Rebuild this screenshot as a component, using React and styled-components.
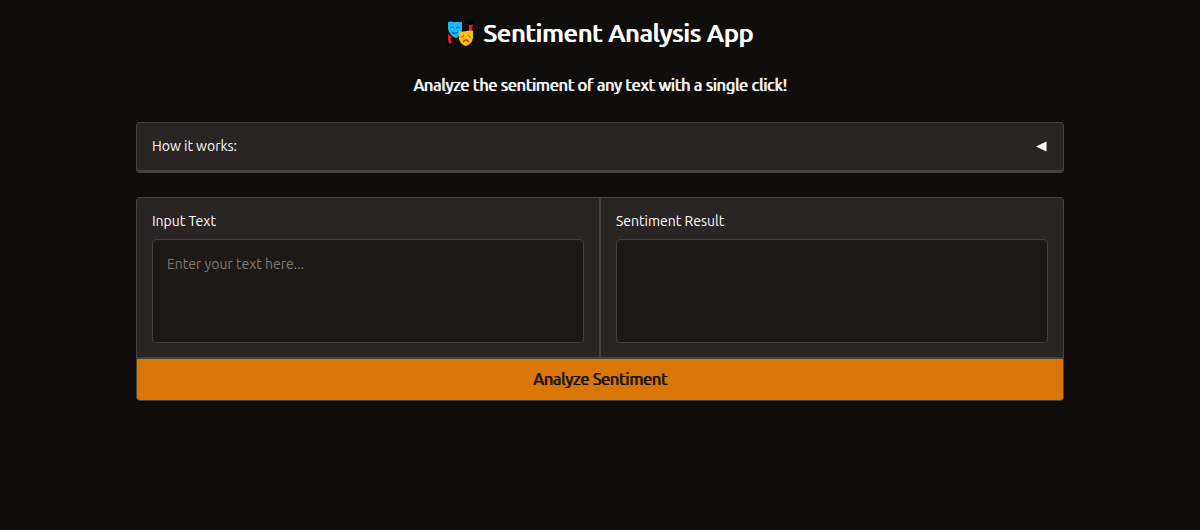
import React, { useState } from 'react';
import styled, { createGlobalStyle } from 'styled-components';

/* Component Styling */
const GlobalStyle = createGlobalStyle`
    * {
        box-sizing: border-box;
    }
    body {
        margin: 0;
        background-color: #0f0e0d;
        color: #fff;
        font-family: "Ubuntu", "Noto Sans", sans-serif;
        font-size: 14px;
        line-height: 21px;
    }
`;
const Page = styled.main`
    max-width: 960px;
    margin: 0 auto;
    padding: 14px 16px;
`;
const Title = styled.h1`
    display: flex;
    align-items: center;
    justify-content: center;
    gap: 9px;
    margin: 0 0 22px;
    font-size: 25px;
    font-weight: 500;
    line-height: 38px;
    text-shadow: 1px 0 currentColor;
`;
const Subtitle = styled.h3`
    margin: 0 0 26px;
    font-size: 16px;
    font-weight: 400;
    line-height: 22px;
    text-align: center;
    text-shadow: 1px 0 currentColor;
`;
const Accordion = styled.section`
    margin-bottom: 24px;
    border: 1px solid #44403c;
    border-bottom-width: 3px;
    border-radius: 4px;
    background-color: #292524;
`;
const AccordionButton = styled.button`
    display: flex;
    align-items: center;
    justify-content: space-between;
    width: 100%;
    padding: 13px 16px 13px 15px;
    border: none;
    background: none;
    color: #fff;
    font: inherit;
    cursor: pointer;
`;
const AccordionBody = styled.p`
    margin: 0;
    padding: 0 15px 13px;
`;
const Arrow = styled.svg`
    transform: ${props => props.$open ? 'rotate(-90deg)' : 'none'};
`;
const Panel = styled.form`
    overflow: hidden;
    border: 1px solid #44403c;
    border-radius: 4px;
    background-color: #44403c;
`;
const Columns = styled.div`
    display: grid;
    grid-template-columns: 1fr 1fr;
    gap: 2px;
    margin-bottom: 2px;
`;
const Field = styled.div`
    padding: 13px 15px 14px;
    background-color: #292524;
`;
const FieldLabel = styled.label`
    display: block;
    margin-bottom: 7px;
`;
const TextArea = styled.textarea`
    display: block;
    width: 100%;
    height: 104px;
    padding: 14px;
    border: 1px solid #44403c;
    border-radius: 4px;
    outline: none;
    background-color: #1c1917;
    color: #fff;
    font: inherit;
    resize: none;

    &::placeholder {
        color: #807973;
        opacity: 1;
    }
`;
const SubmitButton = styled.button`
    display: block;
    width: 100%;
    padding: 9px 16px 10px;
    border: none;
    background-color: #d97706;
    color: #0f0e0d;
    font: inherit;
    font-size: 16px;
    font-weight: 400;
    line-height: 22px;
    text-shadow: 1px 0 currentColor;
    cursor: pointer;
`;

/* Theatre masks with their ribbons */
const MasksIcon = () => (
    <svg width='27' height='27' viewBox='0 0 27 27' aria-hidden='true'>
        <path d='M1 14L5 17L3 19L5 22L4 24L2 23L1 20Z' fill='#f0192d' />
        <path d='M22 5L26 4L25 9L26 13L23 13L22 10Z' fill='#f0192d' />
        <path d='M0 22L3 25L5 22V26L3 25L1 26Z M20 2L24 1L27 0V4L22 5Z' fill='#000' />
        <path d='M1 2Q4 1 7 2Q12 2 15 2L15 10Q14 16 9 18Q3 16 1 9Z' fill='#20b9ef' />
        <path d='M3 8Q5 6 7 8M9 8Q11 6 13 8' fill='none' stroke='#0864a4' />
        <path d='M5 12Q8 15 11 12' fill='none' stroke='#0864a4' strokeWidth='1.2' />
        <path d='M12 11Q15 12 19 11Q23 10 26 11L26 18Q25 24 19 26Q14 25 12 19Z' fill='#ffc111' />
        <path d='M14 17Q16 17 17 15M21 15Q22 17 24 17' fill='none' stroke='#955305' />
        <path d='M16 22Q19 18 22 22' fill='none' stroke='#955305' strokeWidth='1.3' />
    </svg>
);

/* Component */
export default function App() {
    const [open, setOpen] = useState(false);
    const [text, setText] = useState('');

    return (
        <>
            <GlobalStyle />
            <Page>
                <Title>
                    <MasksIcon />
                    Sentiment Analysis App
                </Title>
                <Subtitle>Analyze the sentiment of any text with a single click!</Subtitle>
                <Accordion>
                    <AccordionButton type='button' aria-expanded={open} onClick={() => setOpen(!open)}>
                        How it works:
                        <Arrow $open={open} width='11' height='11' viewBox='0 0 11 11' aria-hidden='true'>
                            <path d='M0 5.5L10.5 0.5V10.5Z' fill='#fff' />
                        </Arrow>
                    </AccordionButton>
                    {open && <AccordionBody>Enter your text here...</AccordionBody>}
                </Accordion>
                <Panel onSubmit={e => e.preventDefault()}>
                    <Columns>
                        <Field>
                            <FieldLabel htmlFor='input-text'>Input Text</FieldLabel>
                            <TextArea
                                id='input-text'
                                value={text}
                                onChange={e => setText(e.target.value)}
                                placeholder='Enter your text here...'/>
                        </Field>
                        <Field>
                            <FieldLabel htmlFor='sentiment-result'>Sentiment Result</FieldLabel>
                            <TextArea id='sentiment-result' readOnly />
                        </Field>
                    </Columns>
                    <SubmitButton type='submit'>Analyze Sentiment</SubmitButton>
                </Panel>
            </Page>
        </>
    );
}
